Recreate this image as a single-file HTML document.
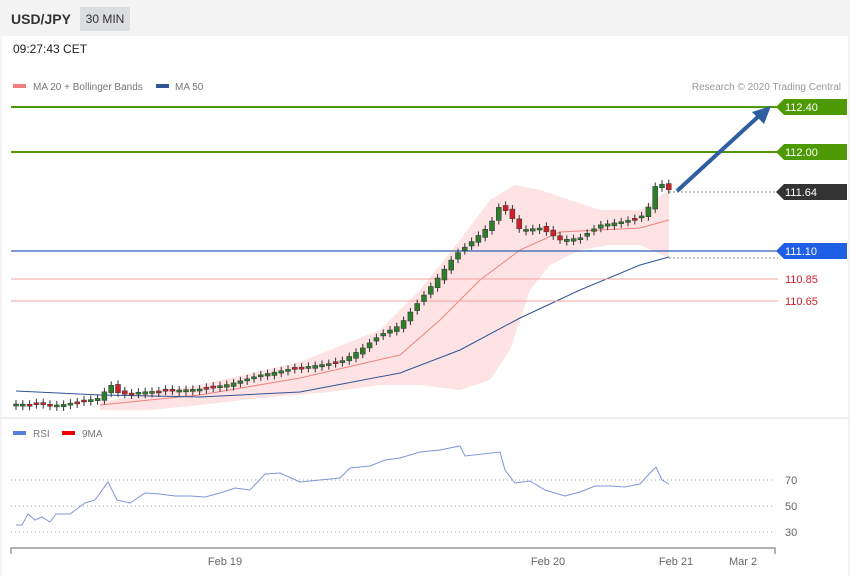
<!DOCTYPE html>
<html><head><meta charset="utf-8"><style>
body{margin:0;width:850px;height:576px;background:#f4f4f4;font-family:"Liberation Sans",sans-serif;overflow:hidden;position:relative}
.hdr{position:absolute;left:0;top:0;width:850px;height:36px;background:#f4f4f4}
.t1{position:absolute;left:11px;top:11px;font-size:14px;font-weight:bold;color:#333}
.tf{position:absolute;left:80px;top:7px;width:50px;height:24px;background:#dcdde0;font-size:12px;color:#333;text-align:center;line-height:24px}
.main{position:absolute;left:2px;top:36px;width:846px;height:540px;background:#fff}
svg{position:absolute;left:0;top:0}
</style></head><body>
<div class="hdr"><div class="t1">USD/JPY</div><div class="tf">30 MIN</div></div>
<div class="main"></div>
<svg width="850" height="576" xmlns="http://www.w3.org/2000/svg" font-family="Liberation Sans, sans-serif">
<text x="13" y="53" font-size="12" fill="#222">09:27:43 CET</text>
<rect x="13" y="84" width="13" height="4" fill="#f08080"/><text x="33" y="90" font-size="10" fill="#777">MA 20 + Bollinger Bands</text>
<rect x="156" y="84" width="13" height="4" fill="#2f5597"/><text x="175" y="90" font-size="10" fill="#777">MA 50</text>
<text x="841" y="90" font-size="10" fill="#999" text-anchor="end">Research © 2020 Trading Central</text>
<path d="M100,402 L200,385 300,362 380,330 420,290 460,240 490,200 515,185 540,190 570,200 600,210 640,210 669,190 L669,258 640,245 610,245 580,250 550,265 530,290 510,350 490,380 460,390 420,385 380,385 330,392 260,398 200,405 150,410 100,410Z" fill="#fde3e3"/>
<polyline points="100,405 200,395 300,378 400,355 440,320 480,280 520,250 560,232 600,230 640,228 669,220" fill="none" stroke="#f08080" stroke-width="1"/>
<polyline points="16,391 100,395 200,397 300,392 400,373 460,350 520,318 580,290 640,265 669,257" fill="none" stroke="#2f5597" stroke-width="1"/>
<line x1="11" y1="107" x2="778" y2="107" stroke="#4e9a06" stroke-width="2"/>
<line x1="11" y1="152" x2="778" y2="152" stroke="#4e9a06" stroke-width="2"/>
<line x1="11" y1="251" x2="778" y2="251" stroke="#2f5fb8" stroke-width="1.2"/>
<line x1="11" y1="279" x2="778" y2="279" stroke="#f4a0a0" stroke-width="1"/>
<line x1="11" y1="301" x2="778" y2="301" stroke="#f4a0a0" stroke-width="1"/>
<line x1="669" y1="192" x2="778" y2="192" stroke="#888" stroke-dasharray="2,2"/>
<line x1="669" y1="258" x2="778" y2="258" stroke="#888" stroke-dasharray="2,2"/>
<path d="M776,107 L784,99 847,99 847,115 784,115Z" fill="#4e9a06"/><text x="785" y="111" font-size="11" fill="#fff">112.40</text>
<path d="M776,152 L784,144 847,144 847,160 784,160Z" fill="#4e9a06"/><text x="785" y="156" font-size="11" fill="#fff">112.00</text>
<path d="M776,192 L784,184 847,184 847,200 784,200Z" fill="#333"/><text x="785" y="196" font-size="11" fill="#fff">111.64</text>
<path d="M776,251 L784,243 847,243 847,259 784,259Z" fill="#1f5fe6"/><text x="785" y="255" font-size="11" fill="#fff">111.10</text>
<text x="785" y="283" font-size="11" fill="#d0202a">110.85</text>
<text x="785" y="305" font-size="11" fill="#d0202a">110.65</text>
<line x1="677" y1="191" x2="760" y2="115" stroke="#2f5fa0" stroke-width="4"/>
<path d="M771,106 L752,112 764,124Z" fill="#2f5fa0"/>
<g id="c"></g>
<line x1="0" y1="418" x2="850" y2="418" stroke="#eee" stroke-width="2"/>
<rect x="13" y="431" width="13" height="4" fill="#5b7fdc"/><text x="33" y="437" font-size="10" fill="#777">RSI</text>
<rect x="62" y="431" width="13" height="4" fill="#e00"/><text x="82" y="437" font-size="10" fill="#777">9MA</text>
<g stroke="#aaa" stroke-dasharray="1,3"><line x1="11" y1="480" x2="775" y2="480"/><line x1="11" y1="506" x2="775" y2="506"/><line x1="11" y1="532" x2="775" y2="532"/></g>
<text x="785" y="484" font-size="11" fill="#666">70</text><text x="785" y="510" font-size="11" fill="#666">50</text><text x="785" y="536" font-size="11" fill="#666">30</text>
<polyline points="16,525 22,525 28,514 35,520 42,517 50,522 56,514 70,514 85,503 95,500 108,482 117,500 130,503 145,493 160,494 175,496 190,496 205,497 220,493 235,488 250,490 265,474 280,473 300,482 320,480 340,478 350,468 370,466 385,460 400,458 420,452 440,450 460,446 465,456 500,452 505,470 515,483 530,481 545,490 565,496 580,492 595,486 610,486 625,487 640,484 650,473 656,467 662,480 669,484" fill="none" stroke="#7f95d8" stroke-width="1"/>
<path d="M11,554 V548 H775 V554" fill="none" stroke="#999" stroke-width="1.5"/>
<g font-size="11" fill="#666" text-anchor="middle"><text x="225" y="565">Feb 19</text><text x="548" y="565">Feb 20</text><text x="676" y="565">Feb 21</text><text x="743" y="565">Mar 2</text></g>
</svg>
<script>
var P=[[16,404],[60,405],[100,398],[110,384],[120,395],[140,392],[200,389],[230,384],[260,375],[290,369],[340,362],[360,350],[380,335],[400,325],[420,300],[440,275],[455,255],[470,243],[490,225],[500,205],[510,215],[520,230],[540,228],[560,240],[580,238],[600,225],[620,222],[640,218],[650,205],[657,180],[663,185],[669,190]];
function f(x){for(var i=1;i<P.length;i++){if(x<=P[i][0]){var a=P[i-1],b=P[i];return a[1]+(b[1]-a[1])*(x-a[0])/(b[0]-a[0]);}}return 190;}
var s='',prev=f(16);
for(var x=16;x<=669;x+=6.8){var c=f(x),o=prev+(Math.sin(x*1.7)*2);var up=c<o;var t=Math.min(o,c),h=Math.max(Math.abs(o-c),2);
s+='<line x1="'+x+'" y1="'+(t-4)+'" x2="'+x+'" y2="'+(t+h+4)+'" stroke="#333" stroke-width="1"/>';
s+='<rect x="'+(x-2.5)+'" y="'+t+'" width="5" height="'+h+'" fill="'+(up?'#2d7d2d':'#d0202a')+'" stroke="#333" stroke-width="0.5"/>';prev=c;}
document.getElementById('c').innerHTML=s;
</script>
</body></html>
